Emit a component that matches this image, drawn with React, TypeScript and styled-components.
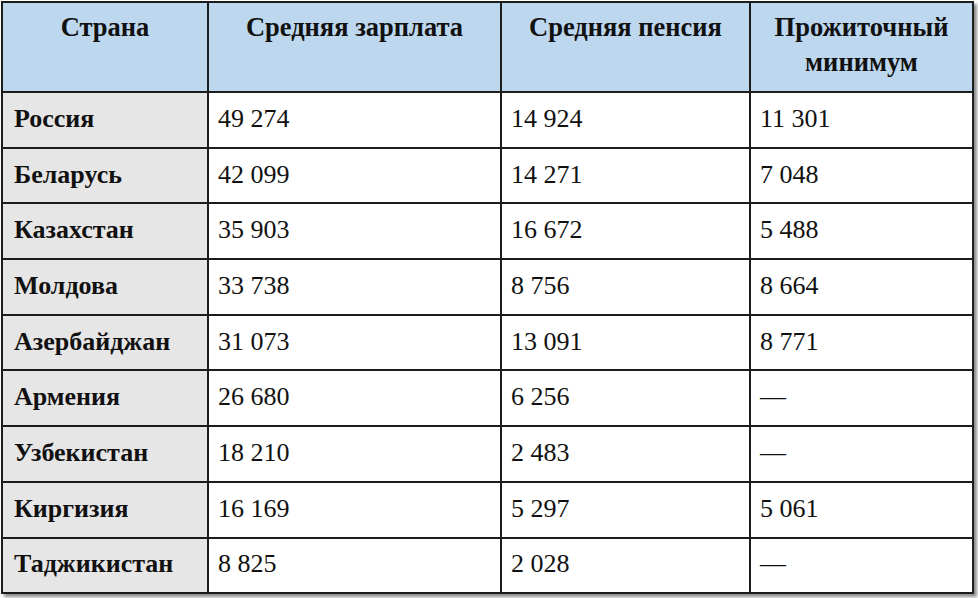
import React from "react";
import styled, { createGlobalStyle } from "styled-components";

const GlobalStyle = createGlobalStyle`
  html, body {
    margin: 0;
    padding: 0;
    background: #ffffff;
  }
`;

const Page = styled.div`
  padding: 1px 0 0 1px;
  width: 978px;
  height: 598px;
  box-sizing: border-box;
`;

const Table = styled.table`
  width: 971px;
  border-collapse: collapse;
  table-layout: fixed;
  font-family: "Liberation Serif", "Times New Roman", serif;
  font-size: 26px;
  color: #111;
  box-shadow: 3px 3px 3px rgba(0, 0, 0, 0.45);
`;

const HeadCell = styled.th`
  height: 90px;
  box-sizing: border-box;
  padding: 7px 6px 0;
  background: #bdd7ee;
  border: 2px solid #1c1c1c;
  font-size: 26.5px;
  font-weight: 700;
  text-align: center;
  vertical-align: top;
  line-height: 35px;
`;

const Cell = styled.td<{ $country?: boolean }>`
  height: 55.7px;
  box-sizing: border-box;
  padding: 0 10px 2px ${({ $country }) => ($country ? "11px" : "9px")};
  background: ${({ $country }) => ($country ? "#e7e6e6" : "#ffffff")};
  border: 2px solid #1c1c1c;
  font-weight: ${({ $country }) => ($country ? 700 : 400)};
  text-align: left;
  vertical-align: middle;
  line-height: 30px;
`;

const columns = [
  { title: "Страна", width: 206 },
  { title: "Средняя зарплата", width: 293 },
  { title: "Средняя пенсия", width: 249 },
  { title: "Прожиточный минимум", width: 223 },
];

const rows: [string, string, string, string][] = [
  ["Россия", "49 274", "14 924", "11 301"],
  ["Беларусь", "42 099", "14 271", "7 048"],
  ["Казахстан", "35 903", "16 672", "5 488"],
  ["Молдова", "33 738", "8 756", "8 664"],
  ["Азербайджан", "31 073", "13 091", "8 771"],
  ["Армения", "26 680", "6 256", "—"],
  ["Узбекистан", "18 210", "2 483", "—"],
  ["Киргизия", "16 169", "5 297", "5 061"],
  ["Таджикистан", "8 825", "2 028", "—"],
];

const App: React.FC = () => {
  return (
    <Page>
      <GlobalStyle />
      <Table>
        <colgroup>
          {columns.map((col) => (
            <col key={col.title} style={{ width: col.width }} />
          ))}
        </colgroup>
        <thead>
          <tr>
            {columns.map((col) => (
              <HeadCell key={col.title}>{col.title}</HeadCell>
            ))}
          </tr>
        </thead>
        <tbody>
          {rows.map((row) => (
            <tr key={row[0]}>
              {row.map((value, index) => (
                <Cell key={index} $country={index === 0}>
                  {value}
                </Cell>
              ))}
            </tr>
          ))}
        </tbody>
      </Table>
    </Page>
  );
};

export default App;
